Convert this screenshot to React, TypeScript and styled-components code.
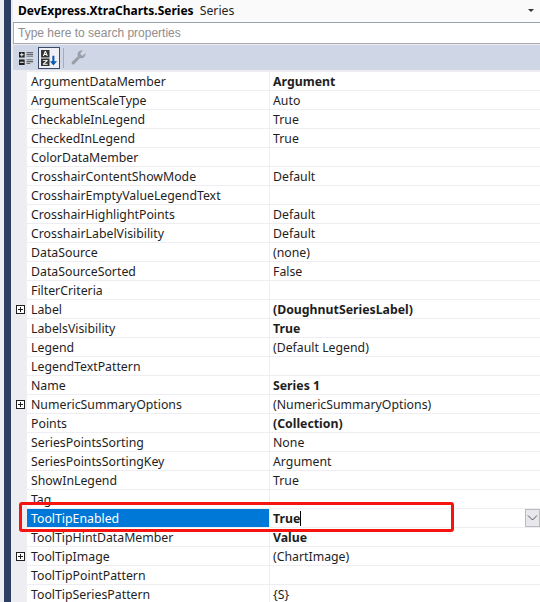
import React, { FC } from 'react';
import styled, { createGlobalStyle } from 'styled-components';

interface Prop {
  name: string;
  value?: string;
  bold?: boolean;
  expand?: boolean;
  active?: boolean;
}

const props: Prop[] = [
  { name: 'ArgumentDataMember', value: 'Argument', bold: true },
  { name: 'ArgumentScaleType', value: 'Auto' },
  { name: 'CheckableInLegend', value: 'True' },
  { name: 'CheckedInLegend', value: 'True' },
  { name: 'ColorDataMember' },
  { name: 'CrosshairContentShowMode', value: 'Default' },
  { name: 'CrosshairEmptyValueLegendText' },
  { name: 'CrosshairHighlightPoints', value: 'Default' },
  { name: 'CrosshairLabelVisibility', value: 'Default' },
  { name: 'DataSource', value: '(none)' },
  { name: 'DataSourceSorted', value: 'False' },
  { name: 'FilterCriteria' },
  { name: 'Label', value: '(DoughnutSeriesLabel)', bold: true, expand: true },
  { name: 'LabelsVisibility', value: 'True', bold: true },
  { name: 'Legend', value: '(Default Legend)' },
  { name: 'LegendTextPattern' },
  { name: 'Name', value: 'Series 1', bold: true },
  { name: 'NumericSummaryOptions', value: '(NumericSummaryOptions)', expand: true },
  { name: 'Points', value: '(Collection)', bold: true },
  { name: 'SeriesPointsSorting', value: 'None' },
  { name: 'SeriesPointsSortingKey', value: 'Argument' },
  { name: 'ShowInLegend', value: 'True' },
  { name: 'Tag' },
  { name: 'ToolTipEnabled', value: 'True', bold: true, active: true },
  { name: 'ToolTipHintDataMember', value: 'Value', bold: true },
  { name: 'ToolTipImage', value: '(ChartImage)', expand: true },
  { name: 'ToolTipPointPattern' },
  { name: 'ToolTipSeriesPattern', value: '{S}' },
];

const App: FC = () => (
  <Page>
    <GlobalStyle />
    <Rail />
    <Panel>
      <TitleBar>
        <strong>DevExpress.XtraCharts.Series</strong>
        <TypeName>Series</TypeName>
        <Caret />
      </TitleBar>
      <Search>Type here to search properties</Search>
      <Toolbar>
        <ToolButton>
          <svg width="15" height="14" viewBox="0 0 16 15">
            <path fill="#1e1e1e" d="M0 1h6v6H0zM0 9h6v6H0z" />
            <path fill="#fff" d="M2.500 2v1.500H1v1h1.500V6h1V4.500H5v-1H3.500V2zM1 11.500h4v1H1z" />
            <path fill="#444" d="M8 1h7v1H8zM8 3h7v1H8zM8 5h7v1H8zM8 9h7v1H8zM8 11h7v1H8zM8 13h4v1H8z" />
          </svg>
        </ToolButton>
        <ToolButton active>
          <svg width="17" height="16" viewBox="0 0 18 17">
            <path fill="#333" d="M0 0h9v8H0zM0 9h9v8H0z" />
            <path fill="#fff" d="M4 1h1.200l2 5.500H6L5.600 5.300H3.500L3.100 6.500H2zM3.900 4.200h1.300L4.550 2.400zM2 10.500h5v1.100L3.600 14.700H7v1H2v-1.100l3.400-3.100H2z" />
            <path fill="#0a5ab4" d="M12 6h2.200v6H17l-3.900 4.500L9.500 12H12z" />
          </svg>
        </ToolButton>
        <ToolDivider />
        <ToolButton>
          <svg width="15" height="15" viewBox="0 0 16 16">
            <path fill="#9a9ea6" d="M15.500 4.200a4.500 4.500 0 0 1-6 4.300L3.700 14.800a1.700 1.700 0 0 1-2.600-2.300l6.300-5.900A4.500 4.500 0 0 1 12.600.5L10 3.200l.6 2.200 2.200.6 2.500-2.700c.1.300.2.600.2.900z" />
          </svg>
        </ToolButton>
      </Toolbar>
      <Grid>
        {props.map((p) => (
          <Row key={p.name}>
            <Gutter>{p.expand && <Expander />}</Gutter>
            <NameCell active={p.active}>{p.name}</NameCell>
            <ValueCell bold={p.bold}>
              {p.value}
              {p.active && <TextCursor />}
              {p.active && (
                <DropButton>
                  <svg width="11" height="6" viewBox="0 0 11 6">
                    <path d="M1 .5l4.500 4.500L10 .5" fill="none" stroke="#555" />
                  </svg>
                </DropButton>
              )}
            </ValueCell>
          </Row>
        ))}
        <Callout />
      </Grid>
    </Panel>
  </Page>
);

export default App;

const GlobalStyle = createGlobalStyle`
  html, body {
    margin: 0;
    background: #fff;
    overflow: hidden;
  }
`;

const Page = styled.div`
  display: flex;
  width: 540px;
  height: 602px;
  overflow: hidden;
  padding-left: 4px;
  box-sizing: border-box;
  background: #eeeef2;
  font-family: 'Noto Sans', 'Open Sans', sans-serif;
  font-size: 12.3px;
  color: #1e1e1e;
`;

const Rail = styled.div`
  flex: 0 0 7px;
  background: #2d4063;
`;

const Panel = styled.div`
  flex: 1;
  min-width: 0;
  display: flex;
  flex-direction: column;
  padding-left: 2px;
  background: #eeeef2;
`;

const TitleBar = styled.div`
  flex: 0 0 21px;
  display: flex;
  align-items: center;
  gap: 6px;
  padding: 0 6px 1px 5px;
  background: #fafafa;
  border-bottom: 1px solid #9aa3b2;
  color: #000;
  font-size: 12px;
  strong {
    font-weight: 700;
  }
`;

const TypeName = styled.span`
  flex: 1;
  color: #1e1e1e;
  font-size: 12.3px;
`;

const Caret = styled.span`
  width: 0;
  height: 0;
  border-left: 3px solid transparent;
  border-right: 3px solid transparent;
  border-top: 3px solid #333;
`;

const Search = styled.div`
  flex: 0 0 20px;
  line-height: 20px;
  padding-left: 4px;
  background: #fff;
  border-bottom: 1px solid #aaaab0;
  border-left: 1px solid #aaaab0;
  color: #8e8e8e;
  font-family: 'Liberation Sans', sans-serif;
  font-size: 12px;
`;

const Toolbar = styled.div`
  flex: 0 0 25px;
  margin-top: 1px;
  display: flex;
  align-items: center;
  gap: 1px;
  padding-left: 2px;
  background: #cfd6e5;
`;

const ToolButton = styled.div<{ active?: boolean }>`
  width: 22px;
  height: 22px;
  display: flex;
  align-items: center;
  justify-content: center;
  box-sizing: border-box;
  border: 1px solid ${(p) => (p.active ? '#3c4a6a' : 'transparent')};
  background: ${(p) => (p.active ? '#eef0f5' : 'transparent')};
`;

const ToolDivider = styled.div`
  width: 1px;
  height: 20px;
  margin: 0 2px;
  background: #a5acbc;
`;

const Grid = styled.div`
  position: relative;
  margin-top: 2px;
  display: flex;
  flex-direction: column;
`;

const Row = styled.div`
  flex: 0 0 19px;
  height: 19px;
  display: flex;
`;

const Gutter = styled.div`
  flex: 0 0 14px;
  display: flex;
  align-items: center;
  justify-content: center;
  background: #eeeef2;
`;

const Expander = styled.span`
  position: relative;
  width: 9px;
  height: 9px;
  box-sizing: border-box;
  border: 1px solid #1e1e1e;
  background: #fff;
  &::before,
  &::after {
    content: '';
    position: absolute;
    background: #1e1e1e;
  }
  &::before {
    left: 1px;
    right: 1px;
    top: 3px;
    height: 1px;
  }
  &::after {
    top: 1px;
    bottom: 1px;
    left: 3px;
    width: 1px;
  }
`;

const NameCell = styled.div<{ active?: boolean }>`
  flex: 0 0 243px;
  box-sizing: border-box;
  padding: 2px 0 0 4px;
  line-height: 15px;
  white-space: nowrap;
  background: ${(p) => (p.active ? '#0078d7' : '#fff')};
  color: ${(p) => (p.active ? '#fff' : '#1e1e1e')};
  border-bottom: 1px solid #eeeef2;
  border-right: 1px solid #eeeef2;
`;

const ValueCell = styled.div<{ bold?: boolean }>`
  position: relative;
  flex: 1;
  padding: 2px 0 0 3px;
  line-height: 15px;
  white-space: nowrap;
  background: #fff;
  font-weight: ${(p) => (p.bold ? 700 : 400)};
  border-bottom: 1px solid #eeeef2;
`;

const TextCursor = styled.span`
  display: inline-block;
  width: 1px;
  height: 15px;
  vertical-align: -3px;
  background: #000;
`;

const DropButton = styled.span`
  position: absolute;
  top: 0;
  right: 0;
  width: 15px;
  height: 18px;
  display: flex;
  align-items: center;
  justify-content: center;
  box-sizing: border-box;
  border: 1px solid #bbb;
  background: #e8e8ec;
`;

const Callout = styled.div`
  position: absolute;
  left: 6px;
  top: 430px;
  width: 435px;
  height: 30px;
  box-sizing: border-box;
  border: 3px solid #f5140f;
  border-radius: 3px;
  pointer-events: none;
`;
